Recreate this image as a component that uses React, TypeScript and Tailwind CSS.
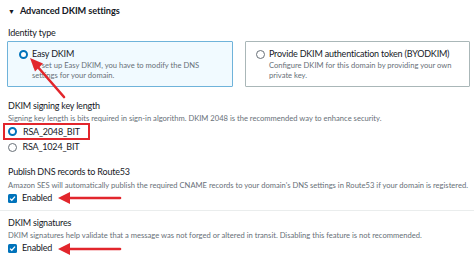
export default function App() {
  const font = { fontFamily: 'Lato, "Open Sans", sans-serif' }

  return (
    <div className="relative w-[474px] h-[259px] overflow-hidden bg-white text-[#16191f]" style={font}>
      {/* Section header */}
      <div className="h-[22px] flex items-center pl-[8px] gap-[5px]">
        <span className="text-[7px] leading-none text-[#16191f]">▼</span>
        <span className="text-[9.2px] tracking-[-0.1px] font-bold leading-[12px]">Advanced DKIM settings</span>
      </div>

      {/* Identity type */}
      <div className="mt-[5px] pl-[8px] h-[12px] text-[9px] tracking-[-0.2px] leading-[12px]">Identity type</div>
      <div className="mt-[2px] flex pl-[7px] gap-[12px]">
        <div className="w-[226px] h-[46px] border border-[#6fb3da] bg-[#f1faff] rounded-[1px] pt-[6px] pl-[11px] flex gap-[4px]">
          <span className="mt-[1.5px] w-[9px] h-[9px] rounded-full border-[2.5px] border-[#0073bb] bg-white shrink-0" />
          <div>
            <div className="h-[12px] text-[9px] tracking-[-0.2px] leading-[12px] whitespace-nowrap">Easy DKIM</div>
            <div className="text-[7.6px] leading-[10px] text-[#687078] whitespace-nowrap">
              To set up Easy DKIM, you have to modify the DNS
              <br />
              settings for your domain.
            </div>
          </div>
        </div>
        <div className="w-[225px] h-[46px] border border-[#aab7b8] rounded-[1px] pt-[6px] pl-[10px] flex gap-[4px]">
          <span className="mt-[1.5px] w-[9px] h-[9px] rounded-full border border-[#687078] bg-white shrink-0" />
          <div>
            <div className="h-[12px] text-[9px] tracking-[-0.2px] leading-[12px] whitespace-nowrap">Provide DKIM authentication token (BYODKIM)</div>
            <div className="text-[7.6px] leading-[10px] text-[#687078] whitespace-nowrap">
              Configure DKIM for this domain by providing your own
              <br />
              private key.
            </div>
          </div>
        </div>
      </div>

      {/* Key length */}
      <div className="mt-[13px] pl-[8px] h-[12px] text-[9px] tracking-[-0.2px] leading-[12px]">DKIM signing key length</div>
      <div className="mt-[1px] pl-[8px] h-[10px] text-[7.6px] leading-[10px] text-[#687078] whitespace-nowrap">
        Signing key length is bits required in sign-in algorithm. DKIM 2048 is the recommended way to enhance security.
      </div>
      <div className="ml-[3px] w-[87px] h-[17px] border-2 border-[#e2262c] flex items-center pl-[3px] gap-[6px]">
        <span className="w-[9px] h-[9px] rounded-full border-[2.5px] border-[#0073bb] bg-white shrink-0" />
        <span className="text-[9px] tracking-[-0.2px] leading-[12px]">RSA_2048_BIT</span>
      </div>
      <div className="h-[14px] flex items-center pl-[7.5px] gap-[6px]">
        <span className="w-[9px] h-[9px] rounded-full border border-[#687078] bg-white shrink-0" />
        <span className="text-[9px] tracking-[-0.2px] leading-[12px]">RSA_1024_BIT</span>
      </div>

      {/* Route53 */}
      <div className="mt-[12px] pl-[8px] h-[12px] text-[9px] tracking-[-0.2px] leading-[12px]">Publish DNS records to Route53</div>
      <div className="mt-[2px] pl-[8px] h-[10px] text-[7.6px] leading-[10px] text-[#687078] whitespace-nowrap">
        Amazon SES will automatically publish the required CNAME records to your domain's DNS settings in Route53 if your domain is registered.
      </div>
      <div className="mt-[2px] h-[12px] pl-[8px] flex items-center gap-[5px]">
        <span className="w-[9px] h-[9px] rounded-[1.5px] bg-[#0073bb] flex items-center justify-center shrink-0">
          <svg width="7" height="7" viewBox="0 0 7 7"><path d="M1 3.6 L2.8 5.3 L6 1.6" fill="none" stroke="white" strokeWidth="1.3" /></svg>
        </span>
        <span className="text-[9px] tracking-[-0.2px] leading-[12px]">Enabled</span>
      </div>
      <div className="mt-[6px] border-t border-[#eaeded]" />

      {/* Signatures */}
      <div className="mt-[6px] pl-[8px] h-[12px] text-[9px] tracking-[-0.2px] leading-[12px]">DKIM signatures</div>
      <div className="mt-[1px] pl-[8px] h-[10px] text-[7.6px] leading-[10px] text-[#687078] whitespace-nowrap">
        DKIM signatures help validate that a message was not forged or altered in transit. Disabling this feature is not recommended.
      </div>
      <div className="mt-[2px] h-[12px] pl-[8px] flex items-center gap-[5px]">
        <span className="w-[9px] h-[9px] rounded-[1.5px] bg-[#0073bb] flex items-center justify-center shrink-0">
          <svg width="7" height="7" viewBox="0 0 7 7"><path d="M1 3.6 L2.8 5.3 L6 1.6" fill="none" stroke="white" strokeWidth="1.3" /></svg>
        </span>
        <span className="text-[9px] tracking-[-0.2px] leading-[12px]">Enabled</span>
      </div>

      {/* Annotation arrows */}
      <svg className="absolute left-0 top-0 pointer-events-none" width="474" height="259" viewBox="0 0 474 259">
        <g stroke="#e2262c" strokeWidth="2.6" fill="none" strokeLinecap="round">
          <line x1="64" y1="97" x2="37" y2="66" />
          <line x1="120" y1="198" x2="68" y2="198" />
          <line x1="120" y1="249" x2="68" y2="249" />
        </g>
        <g fill="#e2262c">
          <polygon points="30,58 43,63.5 35,71.5" />
          <polygon points="58,198 70,192 70,204" />
          <polygon points="58,249 70,243 70,255" />
        </g>
      </svg>
    </div>
  )
}
